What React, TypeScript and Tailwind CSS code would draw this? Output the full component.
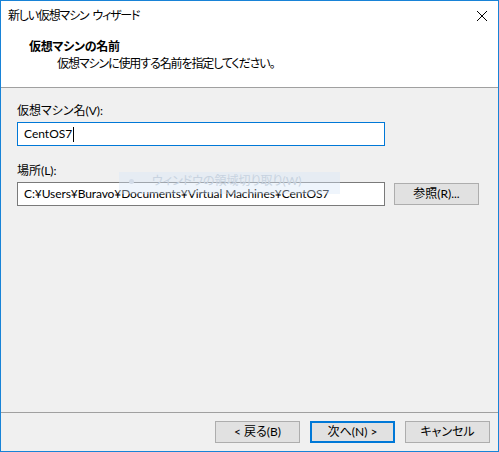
import React from "react";

function WinButton({ label, primary }: { label: string; primary?: boolean }) {
  return (
    <button
      className={
        "h-[22px] w-[85px] bg-[#e1e1e1] text-[12px] leading-none text-black flex items-center justify-center " +
        (primary ? "border-2 border-[#0078d7]" : "border border-[#adadad]")
      }
    >
      {label}
    </button>
  );
}

export default function App() {
  return (
    <div className="w-[499px] h-[452px] border border-[#1883d7] bg-[#f0f0f0] flex flex-col relative overflow-hidden text-black font-['Lato','Noto_Sans_CJK_JP',sans-serif] [font-feature-settings:'palt']">
      {/* title bar */}
      <div className="h-[30px] bg-white flex items-center justify-between pl-[7px] pr-[10px] shrink-0">
        <span className="text-[12px] leading-none tracking-[-1.2px]">
          新しい仮想マシン<span className="ml-[4px]">ウィザード</span>
        </span>
        <svg width="12" height="12" viewBox="0 0 12 12">
          <path d="M1 1 L11 11 M11 1 L1 11" stroke="#000" strokeWidth="1" fill="none" />
        </svg>
      </div>

      {/* header */}
      <div className="h-[57px] bg-white border-b border-[#a0a0a0] pt-[7px] shrink-0">
        <div className="pl-[28px] text-[12px] font-bold leading-[17px] tracking-[-0.3px]">仮想マシンの名前</div>
        <div className="pl-[56px] text-[12px] leading-[17px] tracking-[-1.1px]">
          仮想マシンに使用する名前を指定してください。
        </div>
      </div>

      {/* body */}
      <div className="flex-1 px-[16px] pt-[15px]">
        <div className="text-[12px] leading-[15px]">仮想マシン名(V):</div>
        <div className="mt-[4px] w-[368px] h-[24px] bg-white border border-[#0078d7] flex items-center pl-[6px] text-[12px]">
          CentOS7
          <span className="inline-block w-px h-[15px] bg-black ml-[1px]" />
        </div>
        <div className="mt-[17px] text-[12px] leading-[15px]">場所(L):</div>
        <div className="mt-[4px] flex items-center gap-[9px]">
          <div className="w-[368px] h-[24px] bg-white border border-[#7a7a7a] flex items-center pl-[6px] text-[12px] tracking-[-0.1px]">
            C:¥Users¥Buravo¥Documents¥Virtual Machines¥CentOS7
          </div>
          <WinButton label="参照(R)..." />
        </div>
      </div>

      {/* footer */}
      <div className="h-[39px] border-t border-[#a0a0a0] flex justify-end items-start gap-[10px] pt-[8px] pr-[8px] shrink-0">
        <WinButton label="< 戻る(B)" />
        <WinButton label="次へ(N) >" primary />
        <WinButton label="キャンセル" />
      </div>

      {/* faint ghost tooltip left over from the screen capture */}
      <div className="absolute left-[118px] top-[171px] w-[221px] h-[22px] pb-[4px] bg-[#d6e6f7]/40 flex items-center text-[12px] text-[#c8d3e0]">
        <span className="ml-[10px] w-[5px] h-[5px] rounded-full bg-[#d3dce8]" />
        <span className="ml-[18px]">ウィンドウの領域切り取り(W)</span>
      </div>
    </div>
  );
}
